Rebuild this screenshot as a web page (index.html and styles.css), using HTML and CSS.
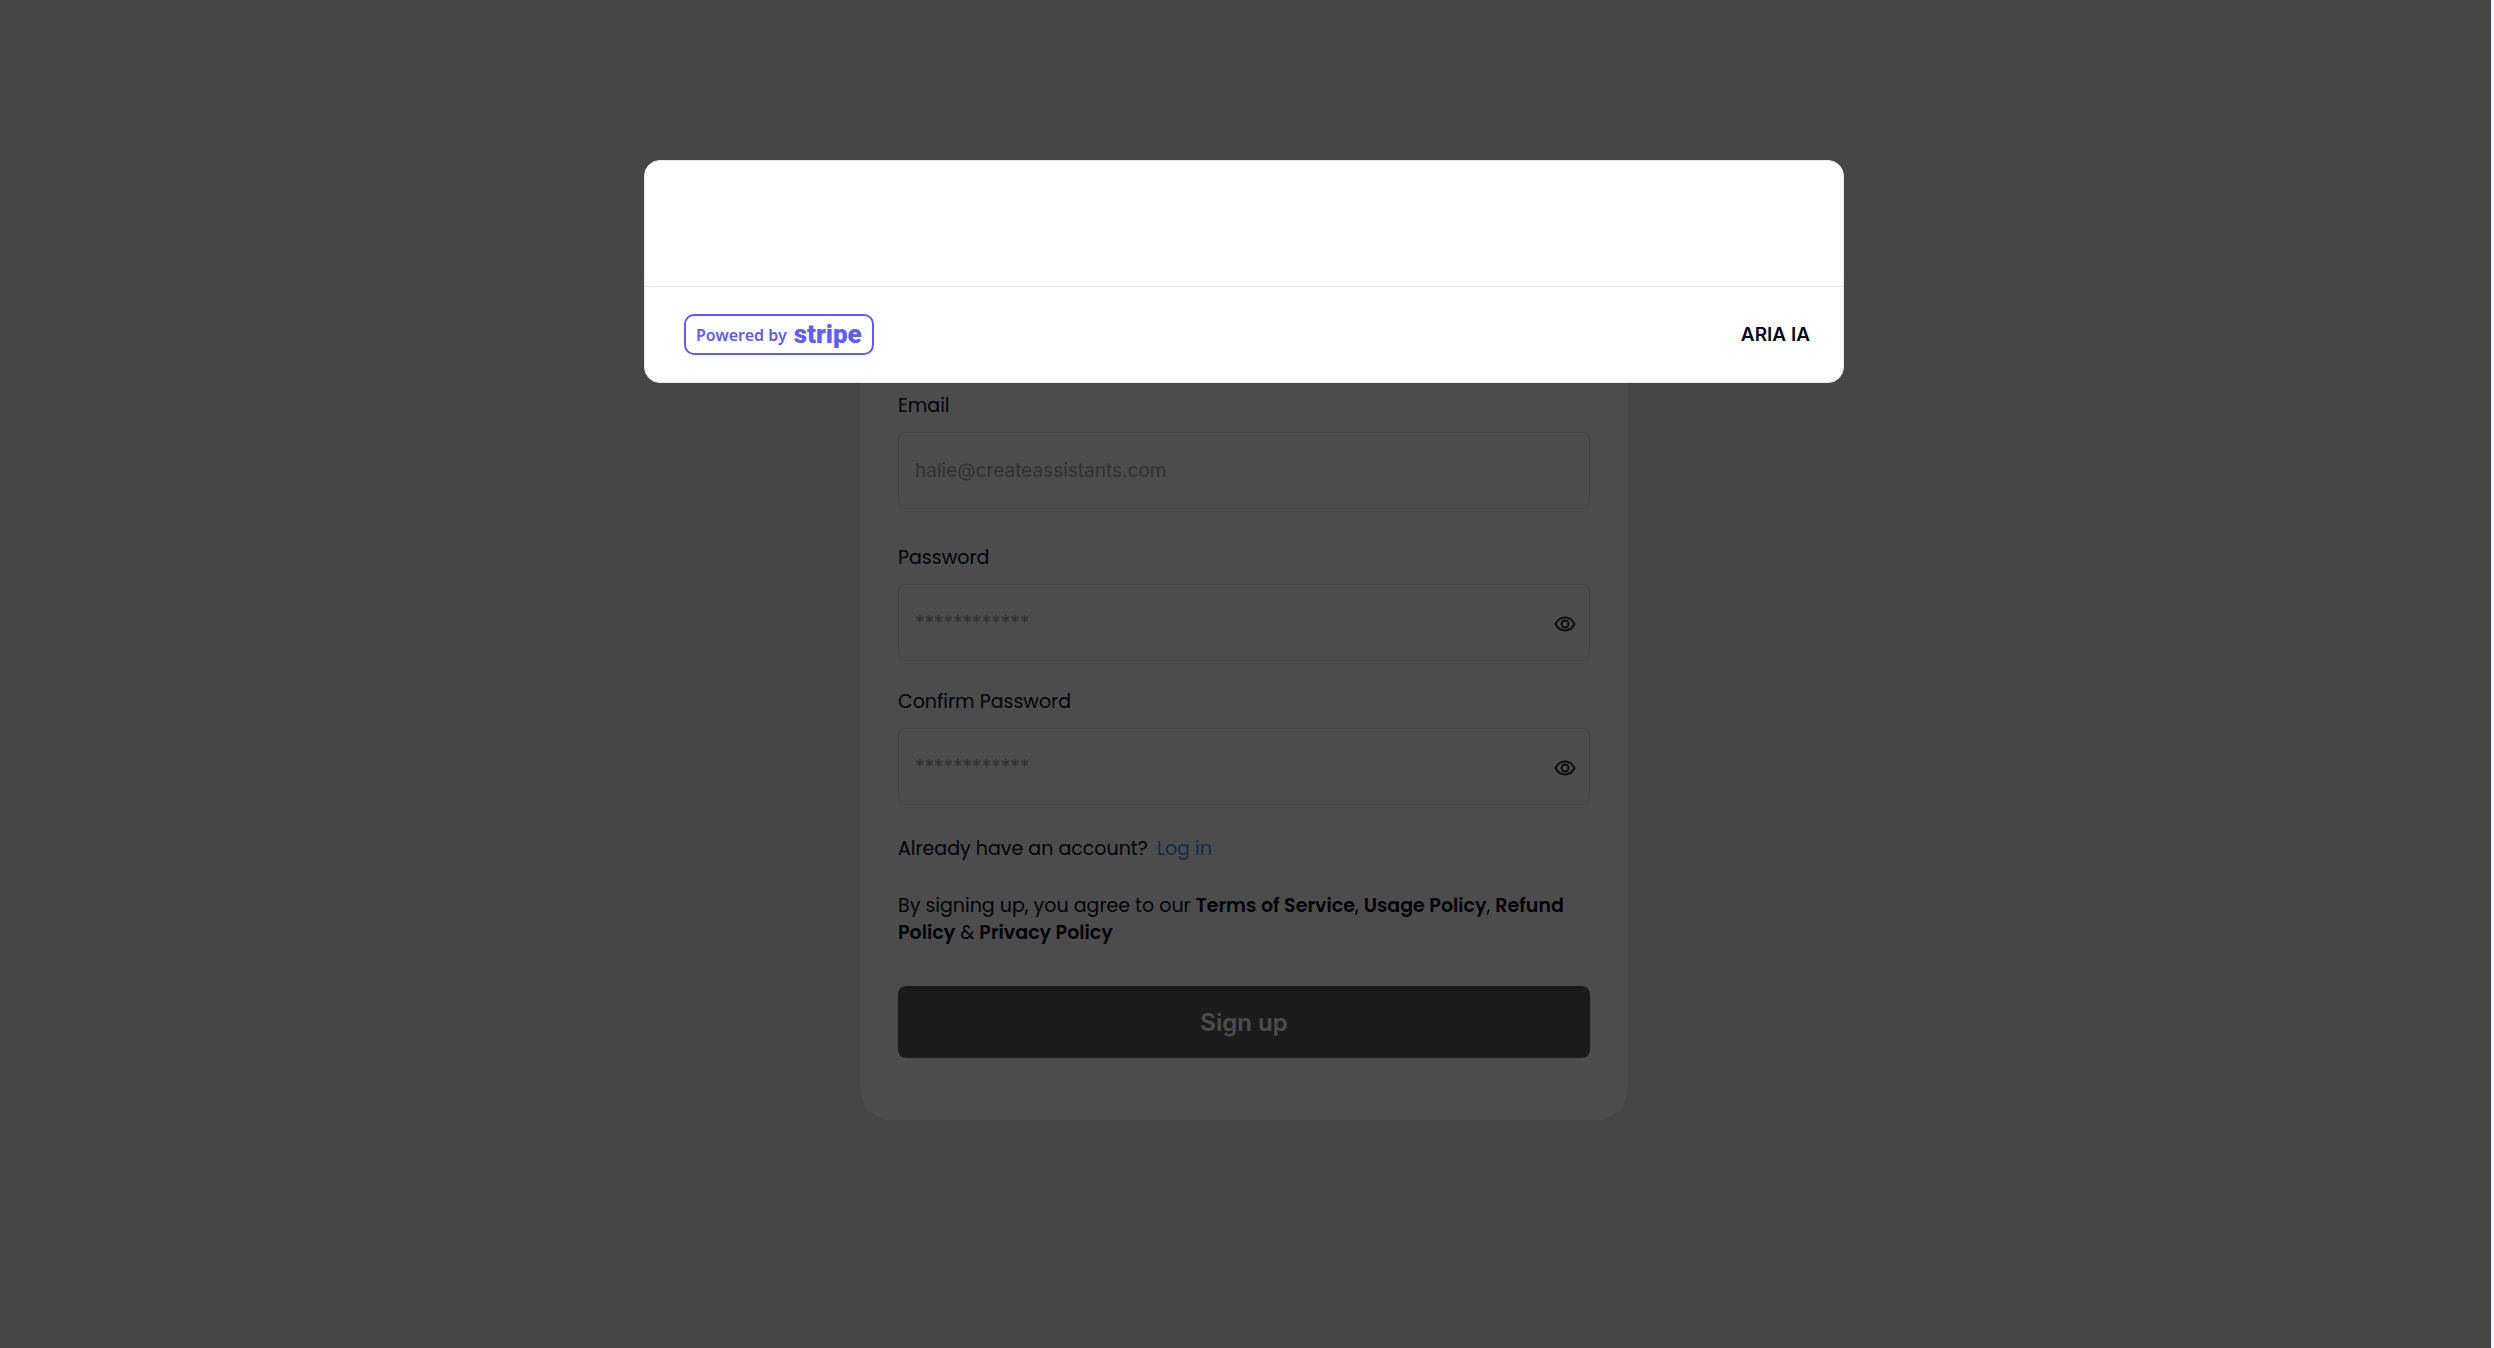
FILE: index.html
```
<!DOCTYPE html>
<html lang="en">

<head>
    <meta charset="UTF-8">
    <meta name="viewport" content="width=device-width, initial-scale=1.0">
    <title>Sign up</title>
    <link rel="stylesheet" href="styles.css">
</head>

<body>
    <main class="page">
        <form class="card">
            <div class="field field-email">
                <label for="email">Email</label>
                <input id="email" type="email" placeholder="halie@createassistants.com">
            </div>
            <div class="field">
                <label for="password">Password</label>
                <div class="input-box">
                    <input id="password" type="password" placeholder="************">
                    <button class="eye" type="button" aria-label="Show password">
                        <svg viewBox="0 0 22 16">
                            <path d="M1.500 8C3.500 4 7 1.500 11 1.500s7.500 2.500 9.500 6.500c-2 4-5.500 6.500-9.500 6.500S3.500 12 1.500 8z"></path>
                            <circle cx="11" cy="8" r="3.500"></circle>
                        </svg>
                    </button>
                </div>
            </div>
            <div class="field">
                <label for="confirm">Confirm Password</label>
                <div class="input-box">
                    <input id="confirm" type="password" placeholder="************">
                    <button class="eye" type="button" aria-label="Show password">
                        <svg viewBox="0 0 22 16">
                            <path d="M1.500 8C3.500 4 7 1.500 11 1.500s7.500 2.500 9.500 6.500c-2 4-5.500 6.500-9.500 6.500S3.500 12 1.500 8z"></path>
                            <circle cx="11" cy="8" r="3.500"></circle>
                        </svg>
                    </button>
                </div>
            </div>
            <p class="login">Already have an account? <a href="#">Log in</a></p>
            <p class="terms">
                By signing up, you agree to our <a href="#">Terms of Service</a>, <a href="#">Usage Policy</a>,
                <a href="#">Refund Policy</a> &amp; <a href="#">Privacy Policy</a>
            </p>
            <button class="submit" type="submit">Sign up</button>
        </form>
    </main>
    <div class="overlay">
        <div class="modal" role="dialog" aria-label="Checkout">
            <div class="modal-body"></div>
            <footer class="modal-footer">
                <a class="stripe-badge" href="#">Powered by <strong>stripe</strong></a>
                <span class="brand">ARIA IA</span>
            </footer>
        </div>
    </div>
</body>

</html>
```
FILE: styles.css
```
* {
    box-sizing: border-box;
}

body {
    margin: 0;
    font-family: Poppins, Inter, sans-serif;
    font-size: 19px;
    line-height: 28px;
    color: #020817;
    background-color: #f1f5f9;
}

.page {
    min-height: 100vh;
    margin-right: 3px;
    padding-right: 3px;
    display: flex;
    justify-content: center;
    align-items: center;
    background-color: #eaeaea;
}

.card {
    width: 100%;
    max-width: 768px;
    padding: 164px 38px 62px;
    display: flex;
    flex-direction: column;
    border-radius: 32px;
    background-color: #ffffff;
}

.field {
    display: flex;
    flex-direction: column;
    gap: 12px;
    margin-bottom: 27px;
}

.field-email {
    margin-bottom: 35px;
}

input {
    width: 100%;
    height: 77px;
    padding: 0 16px;
    border: 1px solid #e2e8f0;
    border-radius: 8px;
    background-color: #ffffff;
    font-family: Inter, sans-serif;
    font-size: 19px;
}

input::placeholder {
    color: #aaaaaa;
}

.input-box {
    position: relative;
}

.input-box input {
    display: block;
    padding-right: 56px;
}

.eye {
    position: absolute;
    top: 32px;
    right: 14px;
    width: 22px;
    height: 16px;
    padding: 0;
    border: none;
    background: none;
}

.eye svg {
    display: block;
    fill: none;
    stroke: #333333;
    stroke-width: 2;
    stroke-linejoin: round;
}

p {
    margin: 0;
}

a {
    text-decoration: none;
}

.login {
    margin-top: 3px;
}

.login a {
    margin-left: 4px;
    color: #4a90ff;
}

.terms {
    margin: 29px 0 40px;
    line-height: 27px;
}

.terms a {
    color: inherit;
    font-weight: 600;
}

.submit {
    height: 72px;
    border: none;
    border-radius: 8px;
    background-color: #5a5a5a;
    color: #ffffff;
    font-family: Inter, sans-serif;
    font-size: 24px;
    font-weight: 600;
}

.overlay {
    position: fixed;
    inset: 0 3px 0 0;
    padding: 160px 3px 0 0;
    background-color: rgba(0, 0, 0, .7);
}

.modal {
    max-width: 1200px;
    margin: 0 auto;
    border: 1px solid #e2e8f0;
    border-radius: 16px;
    background-color: #ffffff;
}

.modal-body {
    height: 125px;
}

.modal-footer {
    height: 96px;
    padding: 0 33px 0 39px;
    display: flex;
    justify-content: space-between;
    align-items: center;
    border-top: 1px solid #e2e8f0;
}

.stripe-badge {
    height: 41px;
    padding: 0 10px;
    display: flex;
    align-items: center;
    gap: 7px;
    border: 2px solid #635bff;
    border-radius: 10px;
    color: #635bff;
    font-family: "Noto Sans", sans-serif;
    font-size: 16px;
    font-weight: 600;
}

.stripe-badge strong {
    padding-bottom: 2px;
    font-family: Roboto, sans-serif;
    font-size: 26px;
    font-weight: 900;
}

.brand {
    font-family: Inter, sans-serif;
    font-weight: 600;
}
```
